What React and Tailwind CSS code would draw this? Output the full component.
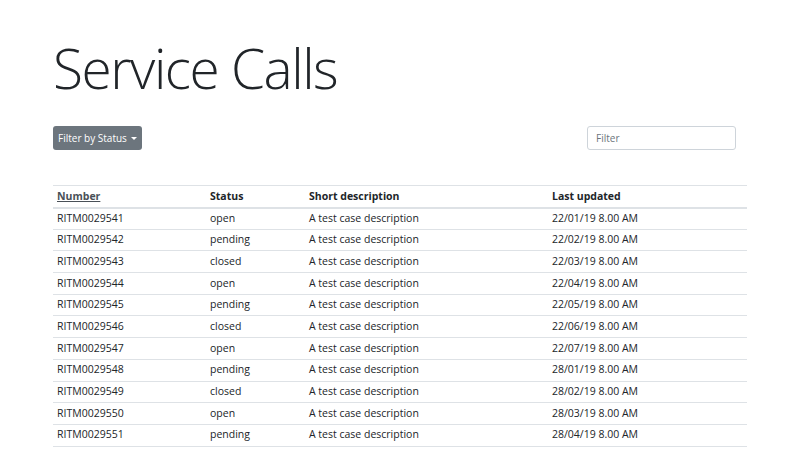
import React from "react";

const rows = [
  ["RITM0029541", "open", "22/01/19 8.00 AM"],
  ["RITM0029542", "pending", "22/02/19 8.00 AM"],
  ["RITM0029543", "closed", "22/03/19 8.00 AM"],
  ["RITM0029544", "open", "22/04/19 8.00 AM"],
  ["RITM0029545", "pending", "22/05/19 8.00 AM"],
  ["RITM0029546", "closed", "22/06/19 8.00 AM"],
  ["RITM0029547", "open", "22/07/19 8.00 AM"],
  ["RITM0029548", "pending", "28/01/19 8.00 AM"],
  ["RITM0029549", "closed", "28/02/19 8.00 AM"],
  ["RITM0029550", "open", "28/03/19 8.00 AM"],
  ["RITM0029551", "pending", "28/04/19 8.00 AM"],
];

const App = () => {
  return (
    <div className="w-[800px] h-[450px] overflow-hidden bg-white text-[#212529] font-['Open_Sans',sans-serif]">
      <div className="mx-[53px]">
        <h1 className="pt-[33px] text-[55px] leading-[70px] font-light tracking-[-1.5px]">Service Calls</h1>

        <div className="flex items-center justify-between mt-[23px] pr-[11px]">
          <button className="flex items-center gap-[4px] h-[24px] px-[5px] rounded-[3px] bg-[#6c757d] text-white text-[10px]">
            Filter by Status
            <span className="border-x-[3px] border-x-transparent border-t-[3px] border-t-white mt-[1px]"></span>
          </button>
          <input
            placeholder="Filter"
            className="w-[149px] h-[24px] px-[8px] border border-[#ced4da] rounded-[3px] text-[10px] placeholder:text-[#6c757d] outline-none"
          />
        </div>

        <table className="w-full mt-[35px] text-[10.5px] border-collapse table-fixed">
          <colgroup>
            <col className="w-[153px]" />
            <col className="w-[99px]" />
            <col className="w-[243px]" />
            <col />
          </colgroup>
          <thead>
            <tr className="h-[22px] border-t border-[#dee2e6] border-b-2">
              <th className="text-left font-bold px-[4px] pt-[1px]">
                <span className="underline text-[#495057]">Number</span>
              </th>
              <th className="text-left font-bold px-[4px] pt-[1px]">Status</th>
              <th className="text-left font-bold px-[4px] pt-[1px]">Short description</th>
              <th className="text-left font-bold px-[4px] pt-[1px]">Last updated</th>
            </tr>
          </thead>
          <tbody>
            {rows.map((r) => (
              <tr key={r[0]} className="h-[21.7px] border-b border-[#dee2e6]">
                <td className="px-[4px]">{r[0]}</td>
                <td className="px-[4px]">{r[1]}</td>
                <td className="px-[4px]">A test case description</td>
                <td className="px-[4px]">{r[2]}</td>
              </tr>
            ))}
          </tbody>
        </table>
      </div>
    </div>
  );
};

export default App;
